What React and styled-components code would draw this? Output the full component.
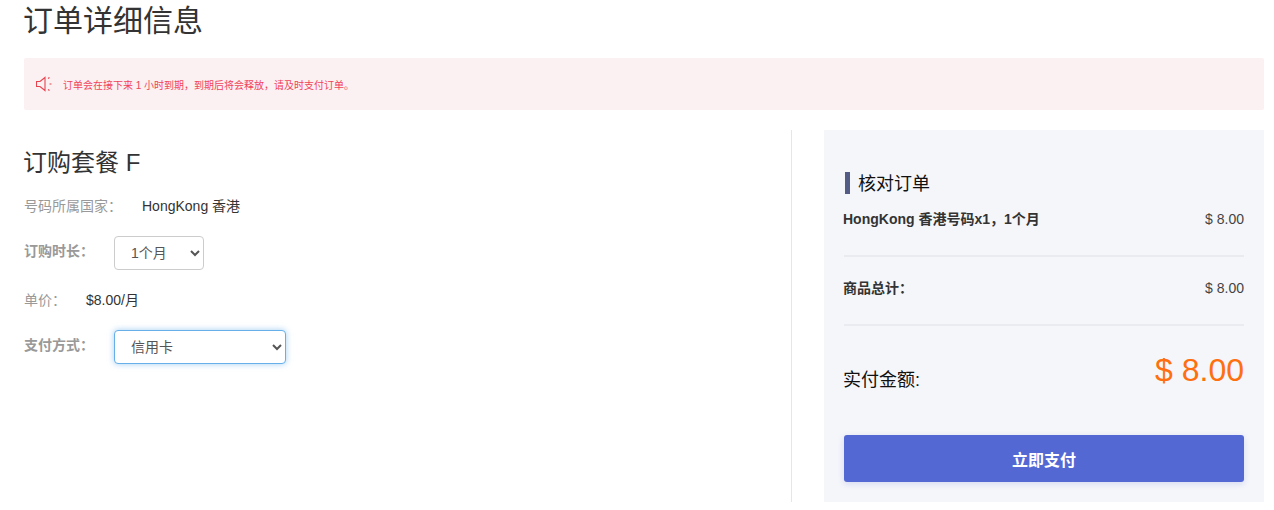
import React from 'react';
import styled, { createGlobalStyle } from 'styled-components';

const GlobalStyle = createGlobalStyle`
  html, body {
    margin: 0;
    padding: 0;
    background: #fff;
    overflow: hidden;
  }
  body {
    font-family: "Liberation Sans", "Noto Sans CJK SC", sans-serif;
    color: #333;
  }
`;

const Page = styled.div`
  width: 1274px;
  height: 510px;
  box-sizing: border-box;
  padding: 0 10px 8px 24px;
  display: flex;
  flex-direction: column;
`;

const Title = styled.h1`
  margin: 0 0 0 -1px;
  height: 58px;
  font-size: 30px;
  line-height: 42px;
  font-weight: 400;
  color: #333;
`;

const Notice = styled.div`
  height: 52px;
  flex-shrink: 0;
  display: flex;
  align-items: center;
  gap: 10px;
  padding-left: 12px;
  background: #fbf0f2;
  border-radius: 2px;
  color: #f0435a;
  font-size: 10px;
`;

const Body = styled.div`
  margin-top: 20px;
  flex: 1;
  display: flex;
  min-height: 0;
`;

const Left = styled.div`
  width: 768px;
  box-sizing: border-box;
  border-right: 1px solid #e6e6e6;
  flex-shrink: 0;
`;

const PlanTitle = styled.h2`
  margin: 19px 0 0 -1px;
  font-size: 24px;
  line-height: 28px;
  font-weight: 400;
  color: #333;
`;

const Row = styled.div`
  display: flex;
  align-items: center;
  height: ${props => props.$h}px;
  margin-top: ${props => props.$top}px;
  font-size: 14px;
`;

const Label = styled.span`
  width: ${props => props.$w}px;
  flex-shrink: 0;
  font-size: 14px;
  color: #999;
  font-weight: ${props => (props.$bold ? 700 : 400)};
  margin-top: ${props => (props.$bold ? -6 : 0)}px;
`;

const Value = styled.span`
  color: #333;
  font-size: 14px;
`;

const Select = styled.select`
  width: ${props => props.$w}px;
  height: 34px;
  box-sizing: border-box;
  padding: 0 0 0 12px;
  background: #fff;
  border: 1px solid ${props => (props.$focus ? '#66afe9' : '#ccc')};
  border-radius: 4px;
  box-shadow: ${props => (props.$focus ? '0 0 6px rgba(102, 175, 233, 0.6)' : 'none')};
  color: #555;
  font-family: inherit;
  font-size: 14px;
  outline: none;
`;

const Panel = styled.div`
  margin-left: 32px;
  flex: 1;
  box-sizing: border-box;
  padding: 42px 20px 0;
  background: #f5f6fa;
`;

const PanelTitle = styled.h3`
  margin: 0 0 0 1px;
  padding-left: 8px;
  height: 22px;
  line-height: 24px;
  border-left: 5px solid #535c85;
  font-size: 18px;
  font-weight: 400;
  color: #111;
`;

const Line = styled.div`
  display: flex;
  justify-content: space-between;
  align-items: center;
  height: ${props => props.$h}px;
  border-bottom: 2px solid #e9ebf0;
  box-sizing: border-box;
  padding-bottom: ${props => props.$pb}px;
  font-size: 14px;
`;

const LineName = styled.span`
  margin: -2px 0 0 -1px;
  font-size: 14px;
  font-weight: 700;
  color: #333;
`;

const LinePrice = styled.span`
  font-size: 14px;
  color: #444;
`;

const TotalRow = styled.div`
  display: flex;
  justify-content: space-between;
  align-items: flex-start;
  height: 109px;
  box-sizing: border-box;
  padding-top: 25px;
`;

const TotalLabel = styled.span`
  margin: 17px 0 0 -1px;
  font-size: 18px;
  line-height: 24px;
  color: #111;
`;

const TotalPrice = styled.span`
  font-size: 32px;
  line-height: 38px;
  color: #ff6f0f;
`;

const PayButton = styled.button`
  display: block;
  width: 100%;
  height: 47px;
  padding: 0;
  border: none;
  border-radius: 3px;
  background: #5468d4;
  box-shadow: 0 2px 6px rgba(84, 104, 212, 0.2);
  color: #fff;
  font-family: inherit;
  font-size: 16px;
  font-weight: 700;
`;

const Speaker = () => (
  <svg width="17" height="16" viewBox="0 0 17 16" fill="none" stroke="#e8434f" strokeWidth="1.1">
    <path d="M0.5 5.5h3.5L9 1.5v13L4 10.5H0.5z" />
    <path d="M12 2.5l1.5-1M13.5 8H15.5M12 13.5l1.5 1" />
  </svg>
);

export default function App() {
  return (
    <Page>
      <GlobalStyle />
      <Title>订单详细信息</Title>
      <Notice>
        <Speaker />
        <span>订单会在接下来 1 小时到期，到期后将会释放，请及时支付订单。</span>
      </Notice>
      <Body>
        <Left>
          <PlanTitle>订购套餐 F</PlanTitle>
          <Row $h={20} $top={18}>
            <Label $w={118}>号码所属国家：</Label>
            <Value>HongKong 香港</Value>
          </Row>
          <Row $h={34} $top={21}>
            <Label $w={90} $bold>订购时长：</Label>
            <Select $w={90} defaultValue="1">
              <option value="1">1个月</option>
              <option value="3">3个月</option>
            </Select>
          </Row>
          <Row $h={18} $top={20}>
            <Label $w={62}>单价：</Label>
            <Value>$8.00/月</Value>
          </Row>
          <Row $h={34} $top={22}>
            <Label $w={90} $bold>支付方式：</Label>
            <Select $w={172} $focus defaultValue="card">
              <option value="card">信用卡</option>
              <option value="paypal">PayPal</option>
            </Select>
          </Row>
        </Left>
        <Panel>
          <PanelTitle>核对订单</PanelTitle>
          <Line $h={63} $pb={11}>
            <LineName>HongKong 香港号码x1，1个月</LineName>
            <LinePrice>$ 8.00</LinePrice>
          </Line>
          <Line $h={69} $pb={5}>
            <LineName>商品总计：</LineName>
            <LinePrice>$ 8.00</LinePrice>
          </Line>
          <TotalRow>
            <TotalLabel>实付金额:</TotalLabel>
            <TotalPrice>$ 8.00</TotalPrice>
          </TotalRow>
          <PayButton>立即支付</PayButton>
        </Panel>
      </Body>
    </Page>
  );
}
